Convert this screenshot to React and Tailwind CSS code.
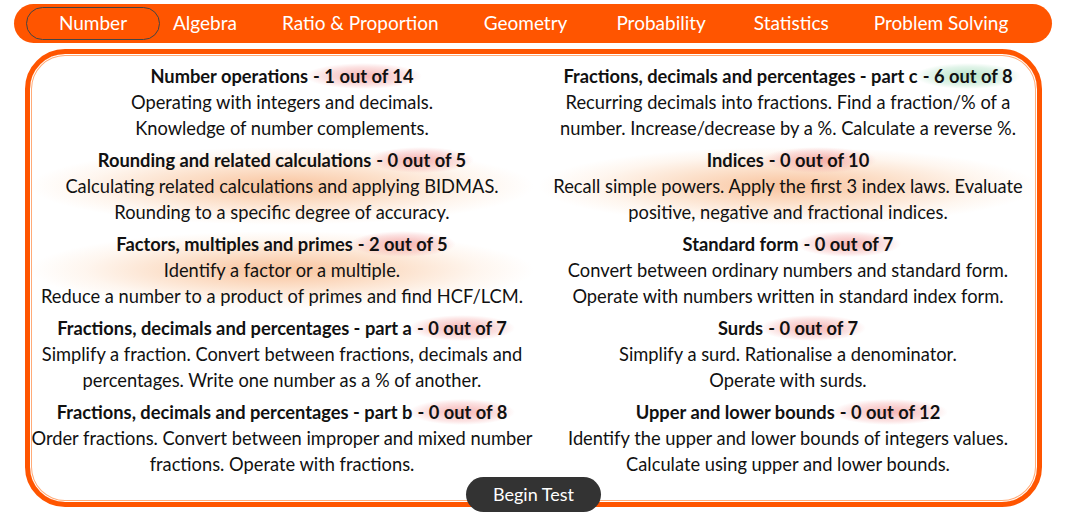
import React from 'react';

const tabs = [
  { label: 'Algebra', ml: 'ml-[13px]' },
  { label: 'Ratio & Proportion', ml: 'ml-[45px]' },
  { label: 'Geometry', ml: 'ml-[45px]' },
  { label: 'Probability', ml: 'ml-[49px]' },
  { label: 'Statistics', ml: 'ml-[48px]' },
  { label: 'Problem Solving', ml: 'ml-[45px]' },
];

const left = [
  { title: 'Number operations', score: '1 out of 14', lines: ['Operating with integers and decimals.', 'Knowledge of number complements.'] },
  { title: 'Rounding and related calculations', score: '0 out of 5', glow: true, lines: ['Calculating related calculations and applying BIDMAS.', 'Rounding to a specific degree of accuracy.'] },
  { title: 'Factors, multiples and primes', score: '2 out of 5', glow: true, lines: ['Identify a factor or a multiple.', 'Reduce a number to a product of primes and find HCF/LCM.'] },
  { title: 'Fractions, decimals and percentages - part a', score: '0 out of 7', lines: ['Simplify a fraction. Convert between fractions, decimals and', 'percentages. Write one number as a % of another.'] },
  { title: 'Fractions, decimals and percentages - part b', score: '0 out of 8', lines: ['Order fractions. Convert between improper and mixed number', 'fractions. Operate with fractions.'] },
];

const right = [
  { title: 'Fractions, decimals and percentages - part c', score: '6 out of 8', good: true, lines: ['Recurring decimals into fractions. Find a fraction/% of a', 'number. Increase/decrease by a %. Calculate a reverse %.'] },
  { title: 'Indices', score: '0 out of 10', glow: true, lines: ['Recall simple powers. Apply the first 3 index laws. Evaluate', 'positive, negative and fractional indices.'] },
  { title: 'Standard form', score: '0 out of 7', lines: ['Convert between ordinary numbers and standard form.', 'Operate with numbers written in standard index form.'] },
  { title: 'Surds', score: '0 out of 7', lines: ['Simplify a surd. Rationalise a denominator.', 'Operate with surds.'] },
  { title: 'Upper and lower bounds', score: '0 out of 12', lines: ['Identify the upper and lower bounds of integers values.', 'Calculate using upper and lower bounds.'] },
];

const Topic = ({ topic }) => (
  <div
    className={
      'flex flex-col items-center text-center ' +
      (topic.glow
        ? 'bg-[radial-gradient(closest-side,rgba(244,145,75,0.55),rgba(247,170,110,0.36)_45%,rgba(252,205,165,0.18)_78%,rgba(255,255,255,0))]'
        : '')
    }
  >
    <div className="h-[26px] leading-[26px] font-bold whitespace-nowrap">
      {topic.title}
      <span
        className={
          'inline-block px-[8px] -mr-[8px] -ml-[3px] rounded-full ' +
          (topic.good
            ? 'bg-[radial-gradient(closest-side,rgba(110,200,145,0.5),rgba(160,220,185,0.32)_70%,rgba(255,255,255,0))]'
            : 'bg-[radial-gradient(closest-side,rgba(236,105,105,0.5),rgba(244,160,160,0.3)_70%,rgba(255,255,255,0))]')
        }
      >
        {' - '}
        {topic.score}
      </span>
    </div>
    {topic.lines.map((l) => (
      <div key={l} className="h-[26px] leading-[26px] whitespace-nowrap">
        {l}
      </div>
    ))}
  </div>
);

export default function App() {
  return (
    <div className="w-[1091px] h-[514px] bg-white overflow-hidden pt-[4px] pl-[14px] text-[#111] font-['Lato',sans-serif]">
      <nav className="flex items-center w-[1038px] h-[39px] rounded-full bg-[#ff5500] text-white text-[19px]">
        <div className="ml-[12px] w-[134px] h-[33px] flex items-center justify-center rounded-full border border-[#444]">
          Number
        </div>
        {tabs.map((t) => (
          <span key={t.label} className={t.ml}>
            {t.label}
          </span>
        ))}
      </nav>

      <div className="ml-[11px] mt-[6px] w-[1017px] rounded-[40px] border-[5px] border-[#ff5500] shadow-[inset_0_0_0_1px_#fff,inset_0_0_0_2px_#ffab78] flex flex-col items-center pt-[9px] text-[18.3px]">
        <div className="grid grid-cols-[504px_504px] w-full">
          <div className="flex flex-col gap-[6px]">
            {left.map((t) => (
              <Topic key={t.title} topic={t} />
            ))}
          </div>
          <div className="flex flex-col gap-[6px] pl-[4px]">
            {right.map((t) => (
              <Topic key={t.title} topic={t} />
            ))}
          </div>
        </div>
        <button className="mb-[-10px] w-[135px] h-[35px] rounded-full bg-[#333] text-white text-[18px]">
          Begin Test
        </button>
      </div>
    </div>
  );
}
